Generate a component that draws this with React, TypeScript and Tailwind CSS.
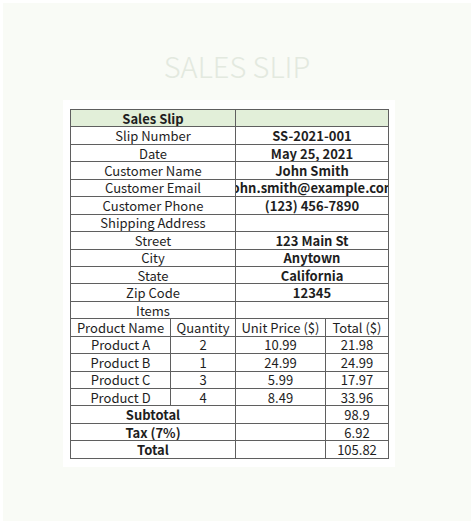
import React from "react";

const font = { fontFamily: '"Noto Sans CJK SC", "Noto Sans", sans-serif' };

type Cell = { text?: string; span: number; bold?: boolean; bg?: string };

const rows: Cell[][] = [
  [{ text: "Sales Slip", span: 2, bold: true, bg: "bg-[#e2efd9]" }, { span: 2, bg: "bg-[#e2efd9]" }],
  [{ text: "Slip Number", span: 2 }, { text: "SS-2021-001", span: 2, bold: true }],
  [{ text: "Date", span: 2 }, { text: "May 25, 2021", span: 2, bold: true }],
  [{ text: "Customer Name", span: 2 }, { text: "John Smith", span: 2, bold: true }],
  [{ text: "Customer Email", span: 2 }, { text: "john.smith@example.com", span: 2, bold: true }],
  [{ text: "Customer Phone", span: 2 }, { text: "(123) 456-7890", span: 2, bold: true }],
  [{ text: "Shipping Address", span: 2 }, { span: 2 }],
  [{ text: "Street", span: 2 }, { text: "123 Main St", span: 2, bold: true }],
  [{ text: "City", span: 2 }, { text: "Anytown", span: 2, bold: true }],
  [{ text: "State", span: 2 }, { text: "California", span: 2, bold: true }],
  [{ text: "Zip Code", span: 2 }, { text: "12345", span: 2, bold: true }],
  [{ text: "Items", span: 2 }, { span: 2 }],
  [{ text: "Product Name", span: 1 }, { text: "Quantity", span: 1 }, { text: "Unit Price ($)", span: 1 }, { text: "Total ($)", span: 1 }],
  [{ text: "Product A", span: 1 }, { text: "2", span: 1 }, { text: "10.99", span: 1 }, { text: "21.98", span: 1 }],
  [{ text: "Product B", span: 1 }, { text: "1", span: 1 }, { text: "24.99", span: 1 }, { text: "24.99", span: 1 }],
  [{ text: "Product C", span: 1 }, { text: "3", span: 1 }, { text: "5.99", span: 1 }, { text: "17.97", span: 1 }],
  [{ text: "Product D", span: 1 }, { text: "4", span: 1 }, { text: "8.49", span: 1 }, { text: "33.96", span: 1 }],
  [{ text: "Subtotal", span: 2, bold: true }, { span: 1 }, { text: "98.9", span: 1 }],
  [{ text: "Tax (7%)", span: 2, bold: true }, { span: 1 }, { text: "6.92", span: 1 }],
  [{ text: "Total", span: 2, bold: true }, { span: 1 }, { text: "105.82", span: 1 }],
];

export default function App() {
  return (
    <div className="w-[474px] h-[524px] bg-white p-[3px]" style={font}>
      <div className="w-full h-full bg-[#f9fbf6] flex flex-col">
        <div className="h-[97px] flex items-start justify-center pt-[42px]">
          <div className="text-[29px] leading-[40px] font-light text-[#e3e9df]">SALES SLIP</div>
        </div>
        <div className="ml-[60px] w-[332px] h-[367px] bg-white pt-[9px] pl-[7px]">
          <div className="grid grid-cols-[100px_65px_90px_63px] border-l border-t border-[#5f5f5f] w-[319px] text-[13px] text-[#1e1e1e]">
            {rows.map((r, i) =>
              r.map((c, j) => (
                <div
                  key={`${i}-${j}`}
                  className={`h-[17.45px] border-r border-b border-[#5f5f5f] flex items-center justify-center overflow-hidden whitespace-nowrap leading-none ${
                    c.span === 2 ? "col-span-2" : ""
                  } ${c.bold ? "font-bold" : ""} ${c.bg ?? ""}`}
                >
                  {c.text ? <span className="shrink-0">{c.text}</span> : null}
                </div>
              ))
            )}
          </div>
        </div>
      </div>
    </div>
  );
}
